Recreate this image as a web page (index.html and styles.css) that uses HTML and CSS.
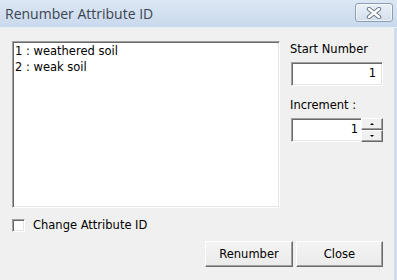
FILE: index.html
```html
<!DOCTYPE html>
<html lang="en">
<head>
  <meta charset="UTF-8">
  <title>Renumber Attribute ID</title>
  <link rel="stylesheet" href="styles.css">
</head>
<body>
  <div class="dialog">
    <div class="titlebar">
      <span class="title">Renumber Attribute ID</span>
      <button class="close-btn" aria-label="Close">
        <svg width="16" height="12" viewBox="0 0 16 12">
          <path d="M3 2 L13 10 M13 2 L3 10" stroke="#6e7b8c" stroke-width="4.4" stroke-linecap="round"/>
          <path d="M3 2 L13 10 M13 2 L3 10" stroke="#ffffff" stroke-width="2.4" stroke-linecap="round"/>
        </svg>
      </button>
    </div>

    <div class="client">
      <div class="main">
        <div class="listbox">
          <div class="item">1 : weathered soil</div>
          <div class="item">2 : weak soil</div>
        </div>

        <div class="side">
          <div class="field-label">Start Number</div>
          <div class="textbox start">1</div>

          <div class="field-label">Increment :</div>
          <div class="spin">
            <div class="textbox">1</div>
            <div class="spin-btns">
              <span class="spin-btn"><i class="arrow up"></i></span>
              <span class="spin-btn"><i class="arrow down"></i></span>
            </div>
          </div>
        </div>
      </div>

      <label class="check-row">
        <span class="checkbox"></span>
        Change Attribute ID
      </label>

      <div class="actions">
        <button class="btn renumber">Renumber</button>
        <button class="btn close">Close</button>
      </div>
    </div>
  </div>
</body>
</html>
```

FILE: styles.css
```css
html, body {
  margin: 0;
  padding: 0;
  width: 397px;
  height: 280px;
  overflow: hidden;
  background: #f0f0f0;
}

body {
  font-family: "DejaVu Sans", sans-serif;
  font-size: 11.5px;
  color: #000;
}

.dialog {
  display: flex;
  flex-direction: column;
  width: 397px;
  height: 280px;
}

/* Title bar */
.titlebar {
  display: flex;
  align-items: flex-start;
  height: 27px;
  padding-left: 5px;
  background: linear-gradient(#dce7f4, #c9d9ec);
  border-bottom: 1px solid #e6eef8;
}

.title {
  font-family: "Open Sans", sans-serif;
  font-size: 14px;
  line-height: 20px;
  margin-top: 4px;
  color: #3c4450;
}

.close-btn {
  margin: 3px 4px 0 auto;
  width: 38px;
  height: 19px;
  padding: 0;
  display: flex;
  align-items: center;
  justify-content: center;
  border: 1px solid #8d9db2;
  border-radius: 3px;
  background: linear-gradient(#eaf0f7, #d4dfec);
  box-shadow: inset 0 0 0 1px rgba(255, 255, 255, 0.6);
}

/* Client area */
.client {
  flex: 1;
  padding: 13px 11px 0 12px;
  border-right: 3px solid #d0dded;
}

.main {
  display: flex;
  gap: 10px;
}

.listbox {
  box-sizing: border-box;
  width: 268px;
  height: 167px;
  padding: 1px 2px;
  background: #fff;
  border-top: 1px solid #a0a0a0;
  border-left: 1px solid #a0a0a0;
  border-right: 1px solid #fff;
  border-bottom: 1px solid #fff;
  box-shadow: inset 1px 1px 0 #696969, inset -1px -1px 0 #e3e3e3;
}

.item {
  line-height: 16px;
  white-space: nowrap;
}

.side {
  width: 93px;
  display: flex;
  flex-direction: column;
}

.field-label {
  line-height: 15px;
  margin-top: 1px;
}

.field-label + .textbox,
.field-label + .spin {
  margin-top: 5px;
}

.textbox {
  box-sizing: border-box;
  width: 92px;
  height: 24px;
  margin-left: 1px;
  padding-right: 6px;
  text-align: right;
  line-height: 20px;
  background: #fff;
  border-top: 1px solid #a0a0a0;
  border-left: 1px solid #a0a0a0;
  border-right: 1px solid #fff;
  border-bottom: 1px solid #fff;
  box-shadow: inset 1px 1px 0 #696969, inset -1px -1px 0 #e3e3e3;
}

.textbox.start {
  margin-bottom: 11px;
}

.spin {
  display: flex;
  width: 92px;
  margin-left: 1px;
}

.spin .textbox {
  width: 70px;
  margin-left: 0;
  padding-right: 3px;
  border-right: none;
  box-shadow: inset 1px 1px 0 #696969, inset 0 -1px 0 #e3e3e3;
}

.spin-btns {
  display: flex;
  flex-direction: column;
  width: 22px;
  height: 24px;
}

.spin-btn {
  box-sizing: border-box;
  flex: 1;
  display: flex;
  align-items: center;
  justify-content: center;
  background: #f0f0f0;
  border-top: 1px solid #fff;
  border-left: 1px solid #fff;
  border-right: 1px solid #696969;
  border-bottom: 1px solid #696969;
  box-shadow: inset -1px -1px 0 #a0a0a0;
}

.arrow {
  width: 0;
  height: 0;
  border-left: 2px solid transparent;
  border-right: 2px solid transparent;
}

.arrow.up {
  border-bottom: 2px solid #000;
}

.arrow.down {
  border-top: 2px solid #000;
}

/* Checkbox row */
.check-row {
  display: flex;
  align-items: center;
  gap: 8px;
  height: 14px;
  margin-top: 10px;
  line-height: 14px;
}

.checkbox {
  box-sizing: border-box;
  width: 13px;
  height: 13px;
  background: #fff;
  border-top: 1px solid #a0a0a0;
  border-left: 1px solid #a0a0a0;
  border-right: 1px solid #fff;
  border-bottom: 1px solid #fff;
  box-shadow: inset 1px 1px 0 #696969, inset -1px -1px 0 #e3e3e3;
}

/* Buttons */
.actions {
  display: flex;
  justify-content: flex-end;
  gap: 3px;
  margin-top: 9px;
}

.btn {
  box-sizing: border-box;
  height: 26px;
  padding: 0;
  font-family: "DejaVu Sans", sans-serif;
  font-size: 11.5px;
  color: #000;
  background: linear-gradient(#f4f4f4, #ebebeb);
  border-top: 1px solid #fff;
  border-left: 1px solid #fff;
  border-right: 1px solid #696969;
  border-bottom: 1px solid #696969;
  box-shadow: inset -1px -1px 0 #a0a0a0;
}

.btn.renumber {
  width: 88px;
}

.btn.close {
  width: 87px;
}
```
